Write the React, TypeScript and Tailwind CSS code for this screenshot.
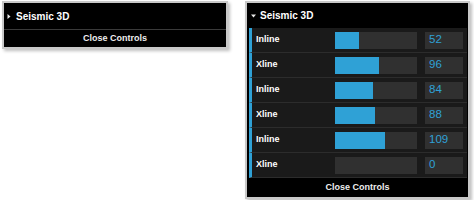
const FONT = { fontFamily: '"Liberation Sans", Arial, sans-serif' };

const rows = [
  { label: "Inline", value: 52 },
  { label: "Xline", value: 96 },
  { label: "Inline", value: 84 },
  { label: "Xline", value: 88 },
  { label: "Inline", value: 109 },
  { label: "Xline", value: 0 },
];

const MAX = 180;

function Caret({ open }: { open: boolean }) {
  return open ? (
    <svg width="5" height="4" viewBox="0 0 5 4" className="shrink-0">
      <path d="M0 0.5h5L2.5 3.5z" fill="#e8e8e8" />
    </svg>
  ) : (
    <svg width="4" height="5" viewBox="0 0 4 5" className="shrink-0">
      <path d="M0.5 0v5L3.5 2.5z" fill="#e8e8e8" />
    </svg>
  );
}

function SliderRow({ label, value }: { label: string; value: number }) {
  return (
    <div className="flex h-[25px] items-center border-b border-l-[3px] border-b-[#2c2c2c] border-l-[#2fa1d6] bg-[#1a1a1a]">
      <span className="w-[83px] shrink-0 pl-[4px] text-[9px] font-bold text-white">{label}</span>
      <div className="h-[17px] w-[82px] shrink-0 bg-[#303030]">
        <div className="h-full bg-[#2fa1d6]" style={{ width: `${(value / MAX) * 100}%` }} />
      </div>
      <div className="ml-[8px] flex h-[17px] w-[38px] shrink-0 items-center bg-[#303030] pl-[4px] text-[11.5px] text-[#2fa1d6]">
        {value}
      </div>
    </div>
  );
}

export default function App() {
  return (
    <div className="flex h-[200px] w-[474px] items-start bg-white" style={FONT}>
      {/* closed panel */}
      <div className="ml-[2px] mt-[1px] w-[226px] border-2 border-[#c8c8c8] bg-black shadow-[2px_2px_3px_rgba(0,0,0,0.25)]">
        <div className="flex h-[27px] items-center gap-[5px] border-b border-[#3a3a3a] pl-[3px]">
          <Caret open={false} />
          <span className="text-[10px] font-bold text-white">Seismic 3D</span>
        </div>
        <div className="flex h-[17px] items-center justify-center text-[9px] font-bold text-[#eee]">
          Close Controls
        </div>
      </div>

      {/* open panel */}
      <div className="ml-[17px] mt-[1px] w-[225px] border-2 border-[#c8c8c8] bg-black shadow-[2px_2px_3px_rgba(0,0,0,0.25)]">
        <div className="flex h-[25px] items-center gap-[4px] pl-[4px]">
          <Caret open />
          <span className="text-[10px] font-bold text-white">Seismic 3D</span>
        </div>
        <div className="pl-[2px] pr-px">
          {rows.map((r, i) => (
            <SliderRow key={i} label={r.label} value={r.value} />
          ))}
        </div>
        <div className="flex h-[19px] items-center justify-center text-[9px] font-bold text-[#eee]">
          Close Controls
        </div>
      </div>
    </div>
  );
}
